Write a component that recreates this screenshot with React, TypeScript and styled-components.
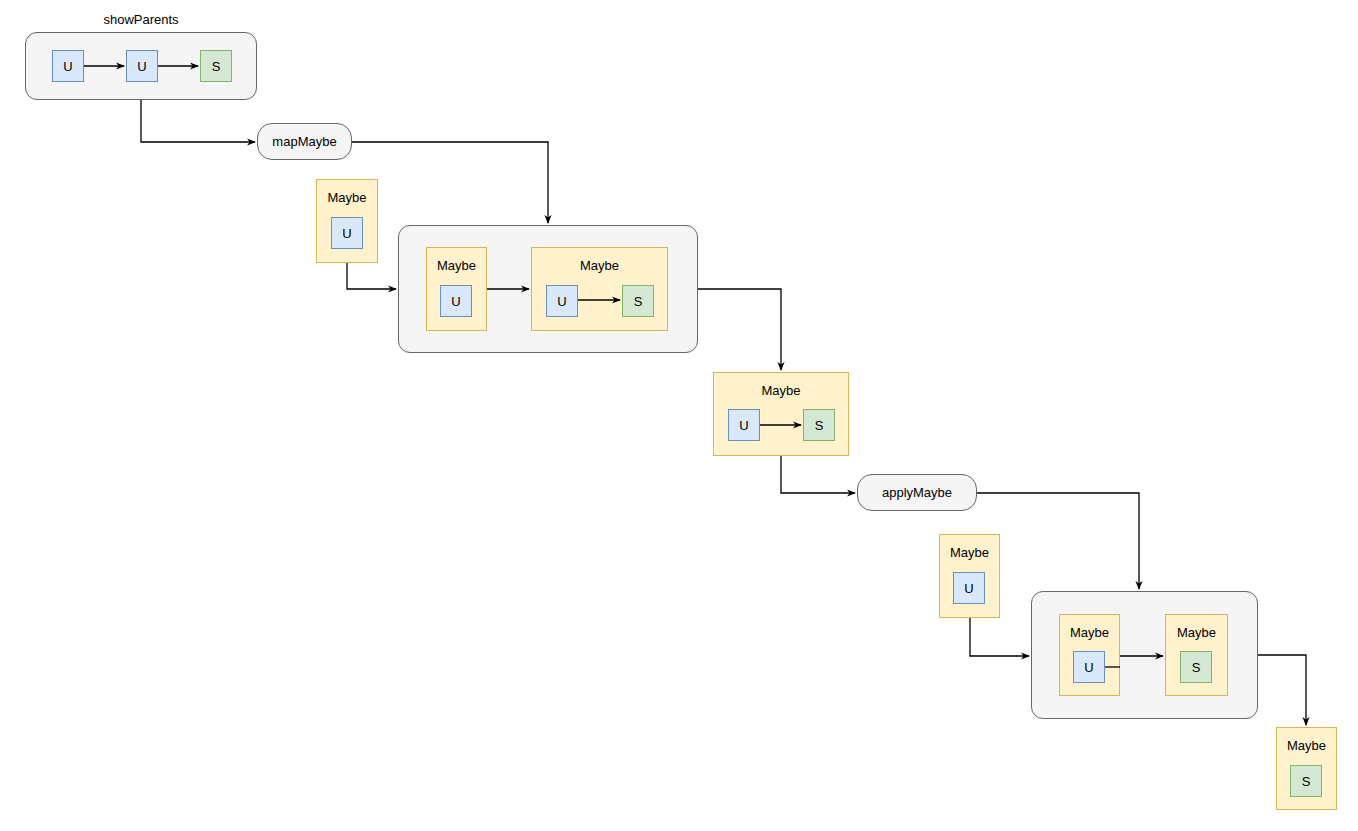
import styled, { createGlobalStyle } from 'styled-components';

const Global = createGlobalStyle`
  html, body { margin: 0; background: #fff; }
  body { font-family: "Liberation Sans", Arial, sans-serif; color: #000; }
`;

type Pos = { $x: number; $y: number };
type Box = Pos & { $w: number; $h: number };

const Canvas = styled.div`
  position: relative;
  width: 1358px;
  height: 831px;
  overflow: hidden;
`;

const Node = styled.div<Box>`
  position: absolute;
  box-sizing: border-box;
  left: ${p => p.$x}px;
  top: ${p => p.$y}px;
  width: ${p => p.$w}px;
  height: ${p => p.$h}px;
`;

const Group = styled(Node)`
  background: #f5f5f5;
  border: 1px solid #666;
  border-radius: 12px;
`;

const Pill = styled(Node)`
  background: #f5f5f5;
  border: 1px solid #666;
  border-radius: 15px;
  display: flex;
  align-items: center;
  justify-content: center;
  font-size: 13px;
`;

const Maybe = styled(Node)`
  background: #fff2cc;
  border: 1px solid #d6b656;
  font-size: 13px;
  text-align: center;
  padding-top: 10px;
`;

const Cell = styled(Node)<{ $kind: 'u' | 's' }>`
  background: ${p => (p.$kind === 'u' ? '#dae8fc' : '#d5e8d4')};
  border: 1px solid ${p => (p.$kind === 'u' ? '#6c8ebf' : '#82b366')};
  display: flex;
  align-items: center;
  justify-content: center;
  font-size: 13px;
  padding-top: 0;
`;

const Caption = styled.div<Pos>`
  position: absolute;
  left: ${p => p.$x}px;
  top: ${p => p.$y}px;
  transform: translateX(-50%);
  font-size: 13px;
  white-space: nowrap;
`;

const Edges = styled.svg`
  position: absolute;
  left: 0;
  top: 0;
  pointer-events: none;
`;

const C = ({ x, y, k }: { x: number; y: number; k: 'u' | 's' }) => (
  <Cell $x={x} $y={y} $w={32} $h={32} $kind={k}>{k === 'u' ? 'U' : 'S'}</Cell>
);

const edges = [
  'M84 66 H124', 'M158 66 H198',
  'M141 100 V142 H255',
  'M352 142 H548 V223',
  'M347 263 V289 H396',
  'M487 289 H529', 'M578 300 H620',
  'M698 289 H781 V370',
  'M760 425 H801',
  'M781 456 V493 H855',
  'M977 493 H1139 V589',
  'M970 618 V656 H1029',
  'M1105 667 H1120', 'M1120 656 H1163',
  'M1258 655 H1306 V725',
];

export default function App() {
  return (
    <Canvas>
      <Global />
      <Caption $x={141} $y={12}>showParents</Caption>
      <Group $x={25} $y={32} $w={232} $h={68} />
      <C x={52} y={50} k="u" />
      <C x={126} y={50} k="u" />
      <C x={200} y={50} k="s" />

      <Pill $x={257} $y={123} $w={95} $h={37}>mapMaybe</Pill>

      <Maybe $x={316} $y={179} $w={62} $h={84}>Maybe</Maybe>
      <C x={331} y={217} k="u" />

      <Group $x={398} $y={225} $w={300} $h={128} />
      <Maybe $x={426} $y={247} $w={61} $h={84}>Maybe</Maybe>
      <C x={440} y={285} k="u" />
      <Maybe $x={531} $y={247} $w={137} $h={84}>Maybe</Maybe>
      <C x={546} y={285} k="u" />
      <C x={622} y={285} k="s" />

      <Maybe $x={713} $y={372} $w={136} $h={84}>Maybe</Maybe>
      <C x={728} y={409} k="u" />
      <C x={803} y={409} k="s" />

      <Pill $x={857} $y={474} $w={120} $h={37}>applyMaybe</Pill>

      <Maybe $x={939} $y={534} $w={61} $h={84}>Maybe</Maybe>
      <C x={953} y={572} k="u" />

      <Group $x={1031} $y={591} $w={227} $h={128} />
      <Maybe $x={1059} $y={614} $w={61} $h={82}>Maybe</Maybe>
      <C x={1073} y={651} k="u" />
      <Maybe $x={1165} $y={614} $w={63} $h={82}>Maybe</Maybe>
      <C x={1180} y={651} k="s" />

      <Maybe $x={1276} $y={727} $w={61} $h={83}>Maybe</Maybe>
      <C x={1290} y={765} k="s" />

      <Edges width={1358} height={831}>
        <defs>
          <marker id="ah" viewBox="0 0 10 10" refX="9" refY="5" markerWidth="9" markerHeight="9" orient="auto" markerUnits="userSpaceOnUse">
            <path d="M0 1 L10 5 L0 9 L3 5 Z" fill="#000" />
          </marker>
        </defs>
        {edges.map((d, i) => (
          <path key={i} d={d} fill="none" stroke="#000" strokeWidth={1.3} markerEnd={i === 12 ? undefined : 'url(#ah)'} />
        ))}
      </Edges>
    </Canvas>
  );
}
